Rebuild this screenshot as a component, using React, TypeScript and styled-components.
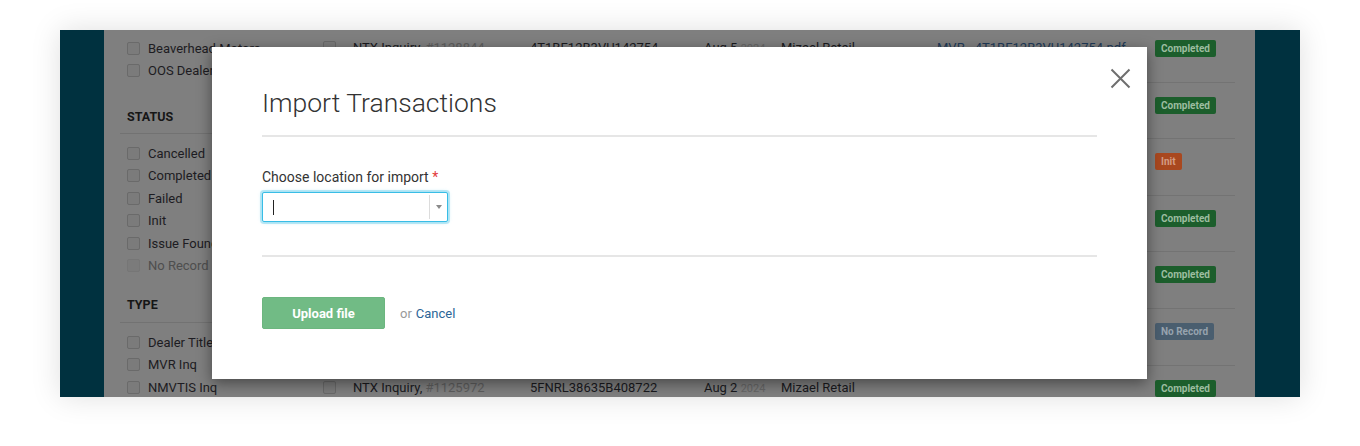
import React from "react";
import styled, { createGlobalStyle } from "styled-components";

const GlobalStyle = createGlobalStyle`
  html, body { margin: 0; padding: 0; background: #ffffff; }
  body { font-family: Roboto, "Liberation Sans", Arial, sans-serif; color: #333; }
  * { box-sizing: border-box; }
`;

const Page = styled.div`
  padding: 30px 60px 0 60px;
  height: 446px;
  overflow: hidden;
`;

const Frame = styled.div`
  position: relative;
  width: 1240px;
  height: 367px;
  display: flex;
  box-shadow: 0 0 28px rgba(0, 0, 0, 0.13);
`;

const Rail = styled.div<{ $w: number }>`
  width: ${(p) => p.$w}px;
  flex: none;
  background: #00313f;
`;

const Content = styled.div`
  flex: 1;
  display: flex;
  background: #7f7f7f;
  overflow: hidden;
`;

const Sidebar = styled.aside`
  width: 206px;
  flex: none;
  padding: 7px 16px 0 16px;
`;

const SectionTitle = styled.div<{ $top: number; $pb: number }>`
  margin-top: ${(p) => p.$top}px;
  padding: 0 0 ${(p) => p.$pb}px 7px;
  border-bottom: 1px solid #727272;
  font-size: 12.5px;
  line-height: 16px;
  font-weight: 700;
  color: #161616;
  text-transform: uppercase;
`;

const CheckList = styled.div<{ $top: number }>`
  margin-top: ${(p) => p.$top}px;
  padding-left: 7px;
`;

const CheckRow = styled.label<{ $faded?: boolean }>`
  display: flex;
  align-items: center;
  gap: 8px;
  height: 22.5px;
  font-size: 13px;
  color: ${(p) => (p.$faded ? "#4e4e4e" : "#1d1c22")};
  white-space: nowrap;
`;

const Box = styled.span<{ $faded?: boolean }>`
  width: 13px;
  height: 13px;
  flex: none;
  border: 1px solid ${(p) => (p.$faded ? "#767676" : "#6a6a6a")};
  border-radius: 2px;
  background: #7b7b7b;
`;

const Table = styled.div`
  flex: 1;
  margin-top: -4px;
  padding-right: 20px;
`;

const Row = styled.div`
  display: grid;
  grid-template-columns: 30px 177px 174px 77px 156px 218px 1fr;
  align-items: start;
  height: 56.6px;
  padding: 13px 0 0 13px;
  border-bottom: 1px solid #737373;
  font-size: 13px;
  line-height: 17px;
  color: #1a1a1e;
  white-space: nowrap;
`;

const RowBox = styled(Box)`
  margin-top: 2px;
`;

const Muted = styled.span`
  color: #5e5e5e;
`;

const Year = styled.span`
  font-size: 11px;
  color: #666;
`;

const FileLink = styled.span`
  color: #203a58;
`;

const badgeColors: Record<string, { bg: string; fg: string }> = {
  Completed: { bg: "#1c5e2c", fg: "#9dbda0" },
  Init: { bg: "#a9481f", fg: "#d49c84" },
  "No Record": { bg: "#4a5e6f", fg: "#97a3ae" },
};

const Badge = styled.span<{ $status: string }>`
  display: inline-block;
  padding: 0 6px;
  height: 17px;
  line-height: 17px;
  border-radius: 2px;
  font-size: 10px;
  font-weight: 700;
  background: ${(p) => badgeColors[p.$status].bg};
  color: ${(p) => badgeColors[p.$status].fg};
`;

const Modal = styled.div`
  position: absolute;
  left: 152px;
  top: 17px;
  width: 935px;
  height: 332px;
  background: #fff;
  padding: 0 50px;
  box-shadow: 0 4px 14px rgba(0, 0, 0, 0.45);
`;

const CloseButton = styled.button`
  position: absolute;
  right: 16px;
  top: 21px;
  width: 21px;
  height: 21px;
  padding: 0;
  border: 0;
  background: transparent;
  cursor: pointer;
  display: flex;
`;

const Header = styled.div`
  padding: 39px 0 15px;
  border-bottom: 2px solid #e6e6e6;
`;

const Title = styled.h2`
  margin: 0;
  font-size: 26.5px;
  line-height: 34px;
  font-weight: 300;
  color: #333;
`;

const Body = styled.div`
  padding: 32px 0 33px;
  border-bottom: 2px solid #e6e6e6;
`;

const Label = styled.div`
  font-size: 14px;
  line-height: 17px;
  color: #333;
  margin-bottom: 6px;
`;

const Required = styled.span`
  color: #e23b3b;
`;

const Select = styled.div`
  width: 186px;
  height: 30px;
  display: flex;
  border: 1px solid #38bde6;
  border-radius: 2px;
  box-shadow: 0 0 0 2px rgba(56, 189, 230, 0.3), 0 0 4px rgba(56, 189, 230, 0.4);
  background: #fff;
`;

const SelectInput = styled.div`
  flex: 1;
  display: flex;
  align-items: center;
  padding-left: 10px;
`;

const Caret = styled.span`
  width: 1px;
  height: 15px;
  background: #222;
`;

const ArrowZone = styled.div`
  width: 18px;
  margin: 2px 0;
  border-left: 1px solid #dcdcdc;
  display: flex;
  align-items: center;
  justify-content: center;
`;

const Footer = styled.div`
  padding-top: 40px;
  display: flex;
  align-items: center;
  font-size: 13px;
`;

const UploadButton = styled.button`
  width: 123px;
  height: 32px;
  border: 1px solid #6cb67f;
  border-radius: 2px;
  background: #71bb85;
  color: #fff;
  font-family: Roboto, "Liberation Sans", Arial, sans-serif;
  font-size: 13px;
  font-weight: 700;
  padding: 0;
`;

const Or = styled.span`
  margin-left: 15px;
  color: #999;
`;

const CancelLink = styled.a`
  margin-left: 4px;
  color: #2b6597;
  text-decoration: none;
  cursor: pointer;
`;

type Tx = {
  name: string;
  id: string;
  vin: string;
  date: string;
  year: string;
  customer: string;
  file: string;
  status: string;
};

const rows: Tx[] = [
  { name: "NTX Inquiry,", id: "#1128844", vin: "4T1BE12B3VU142754", date: "Aug 5", year: "2024", customer: "Mizael Retail", file: "MVR - 4T1BE12B3VU142754.pdf", status: "Completed" },
  { name: "NTX Inquiry,", id: "#1128512", vin: "1HGCM82633A004352", date: "Aug 5", year: "2024", customer: "Mizael Retail", file: "MVR - 1HGCM82633A004352.pdf", status: "Completed" },
  { name: "MVR Inq,", id: "#1127930", vin: "2T1BURHE5JC043821", date: "Aug 4", year: "2024", customer: "Mizael Retail", file: "", status: "Init" },
  { name: "NTX Inquiry,", id: "#1127411", vin: "JTDKN3DU0A0123456", date: "Aug 4", year: "2024", customer: "Mizael Retail", file: "MVR - JTDKN3DU0A0123456.pdf", status: "Completed" },
  { name: "NTX Inquiry,", id: "#1126873", vin: "5YJSA1E26HF190312", date: "Aug 3", year: "2024", customer: "Mizael Retail", file: "MVR - 5YJSA1E26HF190312.pdf", status: "Completed" },
  { name: "NMVTIS Inq,", id: "#1126240", vin: "1FTFW1ET5DFC10312", date: "Aug 3", year: "2024", customer: "Mizael Retail", file: "", status: "No Record" },
  { name: "NTX Inquiry,", id: "#1125972", vin: "5FNRL38635B408722", date: "Aug 2", year: "2024", customer: "Mizael Retail", file: "", status: "Completed" },
];

const Check = ({ label, faded }: { label: string; faded?: boolean }) => (
  <CheckRow $faded={faded}>
    <Box $faded={faded} />
    {label}
  </CheckRow>
);

export default function App() {
  return (
    <>
      <GlobalStyle />
      <Page>
        <Frame>
          <Rail $w={44} />
          <Content>
            <Sidebar>
              <CheckList $top={0}>
                <Check label="Beaverhead Motors" />
                <Check label="OOS Dealer" />
              </CheckList>
              <SectionTitle $top={27} $pb={8}>Status</SectionTitle>
              <CheckList $top={8}>
                <Check label="Cancelled" />
                <Check label="Completed" />
                <Check label="Failed" />
                <Check label="Init" />
                <Check label="Issue Found" />
                <Check label="No Record" faded />
              </CheckList>
              <SectionTitle $top={20} $pb={9}>Type</SectionTitle>
              <CheckList $top={8}>
                <Check label="Dealer Title" />
                <Check label="MVR Inq" />
                <Check label="NMVTIS Inq" />
              </CheckList>
            </Sidebar>
            <Table>
              {rows.map((r) => (
                <Row key={r.id}>
                  <RowBox />
                  <span>
                    {r.name} <Muted>{r.id}</Muted>
                  </span>
                  <span>{r.vin}</span>
                  <span>
                    {r.date} <Year>{r.year}</Year>
                  </span>
                  <span>{r.customer}</span>
                  <FileLink>{r.file}</FileLink>
                  <span>
                    <Badge $status={r.status}>{r.status}</Badge>
                  </span>
                </Row>
              ))}
            </Table>
          </Content>
          <Rail $w={45} />

          <Modal role="dialog" aria-labelledby="import-title">
            <CloseButton aria-label="Close">
              <svg width="21" height="21" viewBox="0 0 21 21">
                <path d="M1.5 1.5 L19.5 19.5 M19.5 1.5 L1.5 19.5" stroke="#6e6e6e" strokeWidth="2" fill="none" />
              </svg>
            </CloseButton>
            <Header>
              <Title id="import-title">Import Transactions</Title>
            </Header>
            <Body>
              <Label>
                Choose location for import <Required>*</Required>
              </Label>
              <Select>
                <SelectInput>
                  <Caret />
                </SelectInput>
                <ArrowZone>
                  <svg width="6" height="4" viewBox="0 0 6 4">
                    <path d="M0 0 L6 0 L3 4 Z" fill="#8a8a8a" />
                  </svg>
                </ArrowZone>
              </Select>
            </Body>
            <Footer>
              <UploadButton>Upload file</UploadButton>
              <Or>or</Or>
              <CancelLink>Cancel</CancelLink>
            </Footer>
          </Modal>
        </Frame>
      </Page>
    </>
  );
}
